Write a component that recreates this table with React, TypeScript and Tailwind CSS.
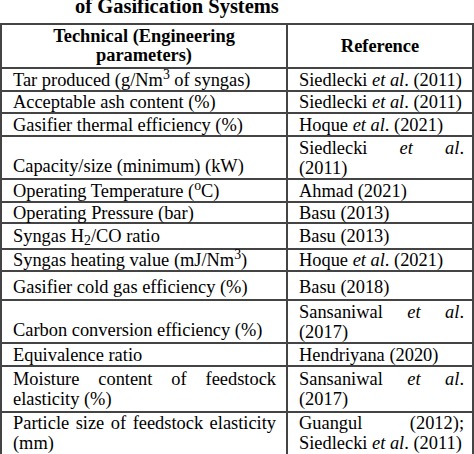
import type { ReactNode } from "react";

type Row = {
  h: string;
  left: ReactNode;
  right: ReactNode;
  leftPos?: string;
  rightPos?: string;
};

const EtAl = () => (
  <>
    <i>et al</i>.
  </>
);

const rows: Row[] = [
  {
    h: "h-[23px]",
    left: (
      <>
        Tar produced (g/Nm<sup>3</sup> of syngas)
      </>
    ),
    right: (
      <>
        Siedlecki <EtAl /> (2011)
      </>
    ),
  },
  {
    h: "h-[22px]",
    left: "Acceptable ash content (%)",
    right: (
      <>
        Siedlecki <EtAl /> (2011)
      </>
    ),
  },
  {
    h: "h-[23px]",
    left: "Gasifier thermal efficiency (%)",
    right: (
      <>
        Hoque <EtAl /> (2021)
      </>
    ),
  },
  {
    h: "h-[43px]",
    left: "Capacity/size (minimum) (kW)",
    leftPos: "justify-end pb-[2px]",
    right: (
      <>
        <span className="flex justify-between">
          <span>Siedlecki</span>
          <i>et</i>
          <span>
            <i>al</i>.
          </span>
        </span>
        <span className="block">(2011)</span>
      </>
    ),
  },
  {
    h: "h-[23px]",
    left: (
      <>
        Operating Temperature (<sup>o</sup>C)
      </>
    ),
    right: "Ahmad (2021)",
  },
  { h: "h-[21px]", left: "Operating Pressure (bar)", right: "Basu (2013)" },
  {
    h: "h-[26px]",
    left: (
      <>
        Syngas H<sub>2</sub>/CO ratio
      </>
    ),
    right: "Basu (2013)",
  },
  {
    h: "h-[22px]",
    left: (
      <>
        Syngas heating value (mJ/Nm<sup>3</sup>)
      </>
    ),
    right: (
      <>
        Hoque <EtAl /> (2021)
      </>
    ),
  },
  {
    h: "h-[29px]",
    left: "Gasifier cold gas efficiency (%)",
    leftPos: "justify-center pt-[3px]",
    right: "Basu (2018)",
    rightPos: "justify-center pt-[3px]",
  },
  {
    h: "h-[43px]",
    left: "Carbon conversion efficiency (%)",
    leftPos: "justify-end pb-[2px]",
    right: (
      <>
        Sansaniwal <EtAl /> (2017)
      </>
    ),
  },
  { h: "h-[23px]", left: "Equivalence ratio", right: "Hendriyana (2020)" },
  {
    h: "h-[46px]",
    left: "Moisture content of feedstock elasticity (%)",
    right: (
      <>
        Sansaniwal <EtAl /> (2017)
      </>
    ),
  },
  {
    h: "h-[44px]",
    left: "Particle size of feedstock elasticity (mm)",
    leftPos: "justify-start",
    right: (
      <>
        Guangul (2012); Siedlecki <EtAl /> (2011)
      </>
    ),
    rightPos: "justify-start",
  },
];

export default function App() {
  return (
    <div className="w-[474px] h-[454px] overflow-hidden bg-white text-black font-[family-name:Liberation_Serif,Times_New_Roman,serif]">
      {/* Caption, cut off at the top */}
      <div className="mt-[-4px] mb-[7px] pl-[75px] text-[20.5px] leading-[20px] font-bold">
        of Gasification Systems
      </div>

      {/* Table */}
      <div className="border-t-2 border-l-2 border-r-2 border-[#444] text-[18.4px] leading-[20px]">
        {/* Header */}
        <div className="grid grid-cols-[286px_1fr] h-[44px] border-b-2 border-[#444] font-bold">
          <div className="flex flex-col justify-center border-r-2 border-[#444] px-[10px] text-center leading-[19px]">
            Technical (Engineering parameters)
          </div>
          <div className="flex flex-col justify-center px-[10px] text-center">
            Reference
          </div>
        </div>

        {rows.map((r, i) => (
          <div
            key={i}
            className={`grid grid-cols-[286px_1fr] border-b-2 border-[#444] ${r.h}`}
          >
            <div
              className={`flex flex-col border-r-2 border-[#444] pl-[11px] pr-[10px] ${
                r.leftPos ?? "justify-center"
              }`}
            >
              <p className="text-justify">{r.left}</p>
            </div>
            <div
              className={`flex flex-col pl-[11px] pr-[8px] ${
                r.rightPos ?? "justify-center"
              }`}
            >
              <p className="text-justify">{r.right}</p>
            </div>
          </div>
        ))}
      </div>
    </div>
  );
}
